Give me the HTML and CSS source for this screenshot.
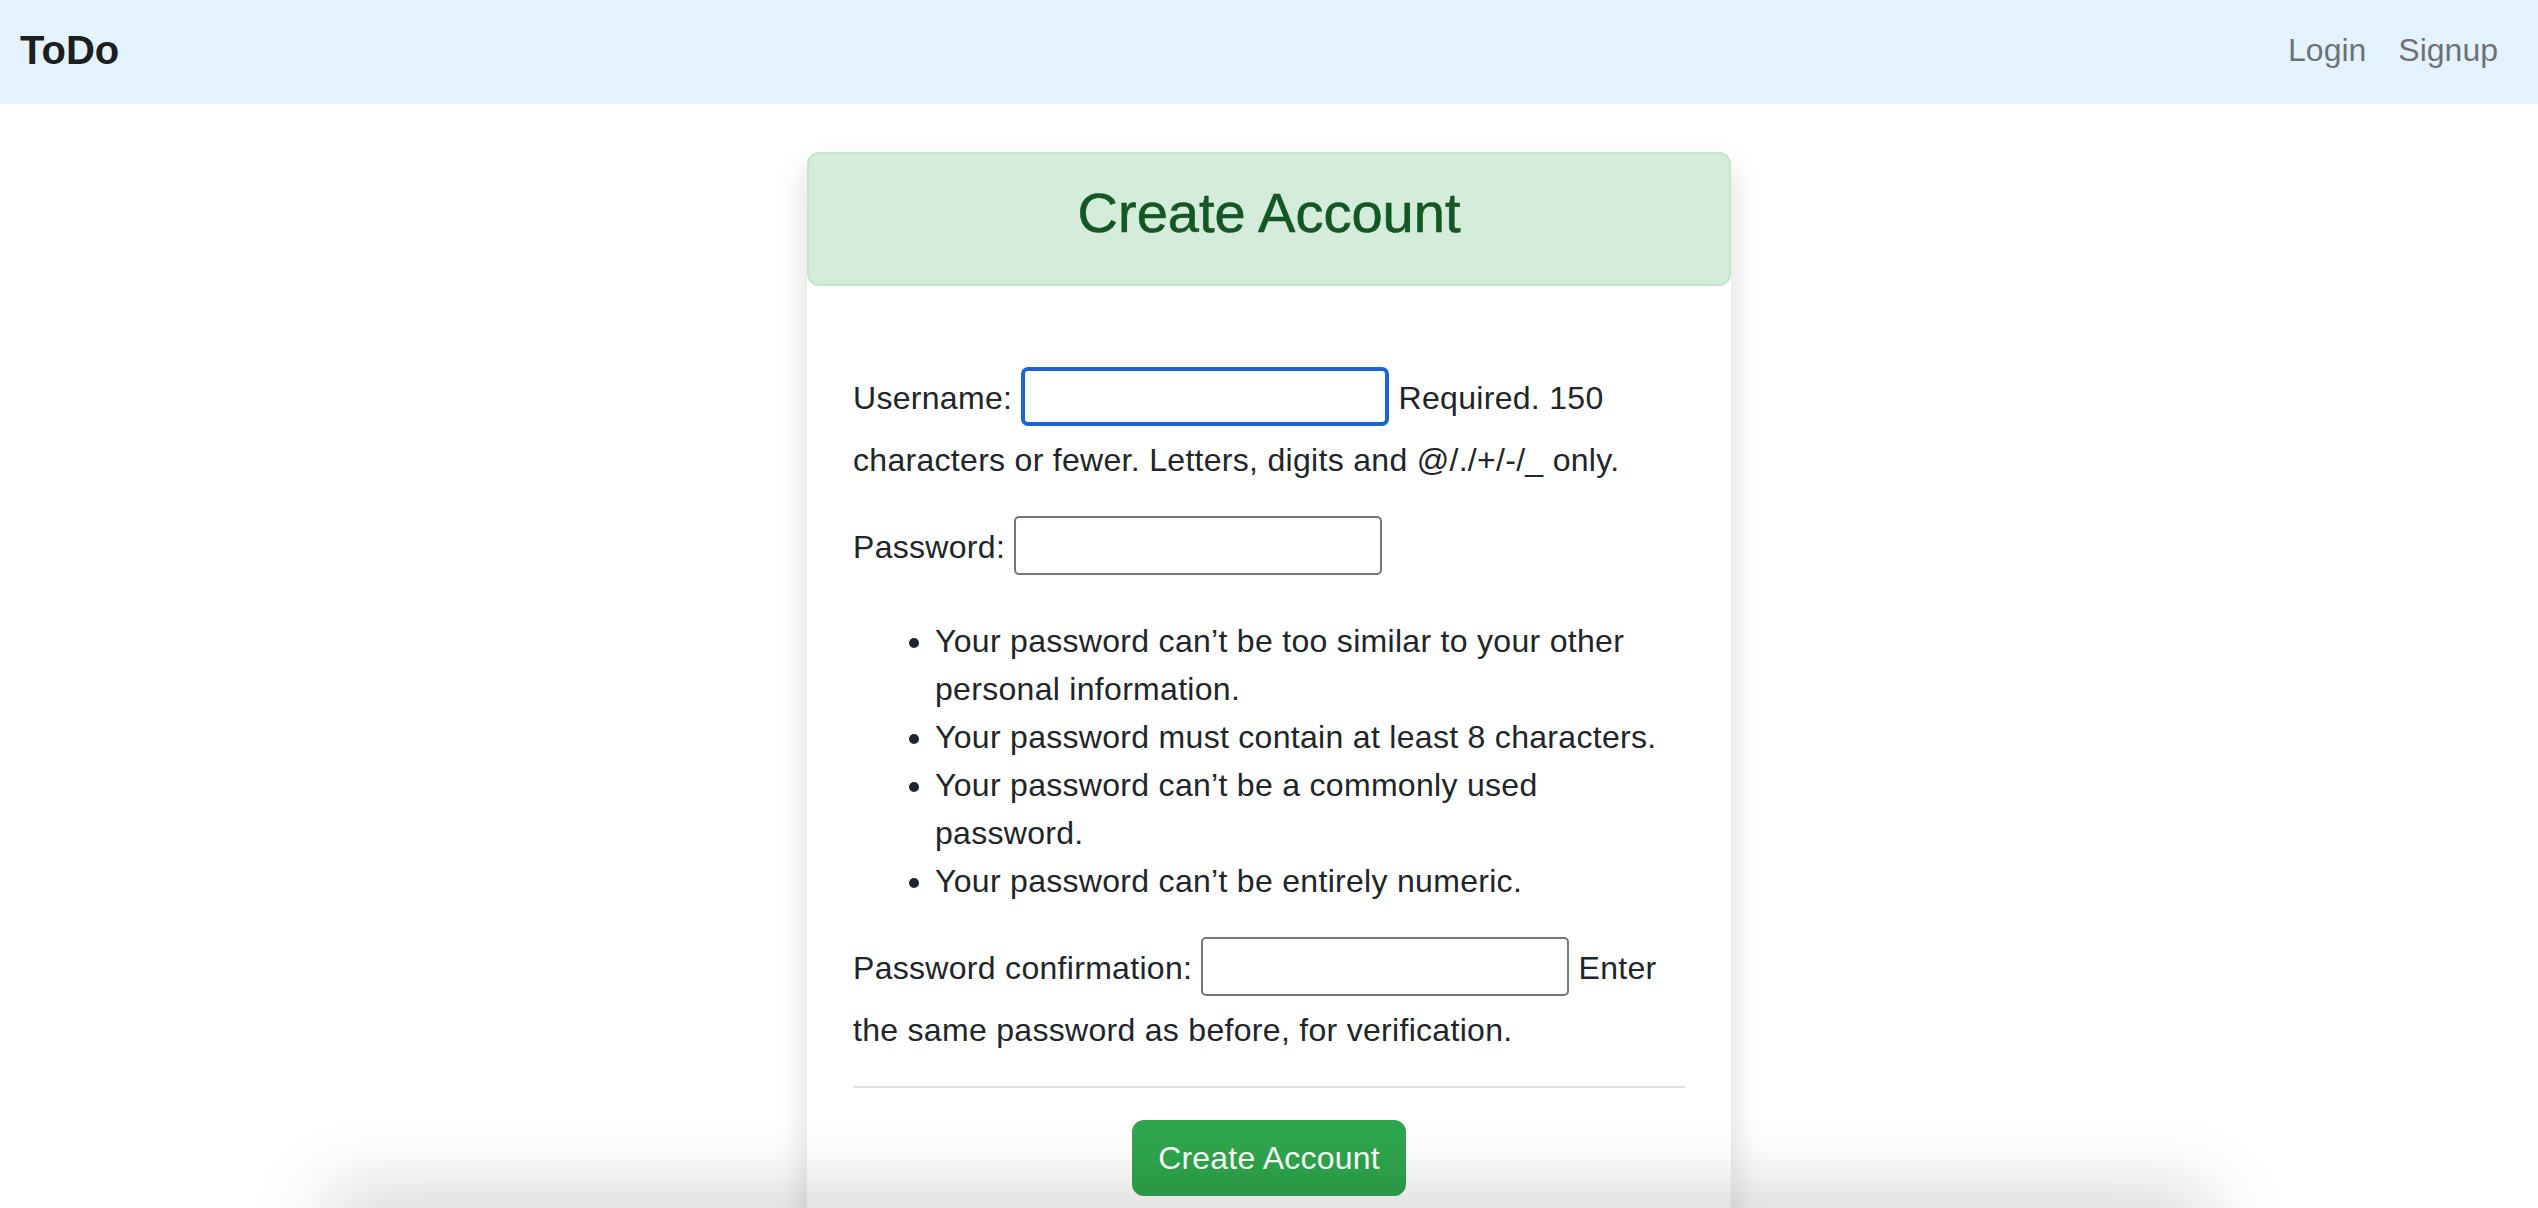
FILE: index.html
```html
<!DOCTYPE html>
<html lang="en">
<head>
<meta charset="utf-8">
<title>ToDo - Create Account</title>
<link rel="stylesheet" href="styles.css">
</head>
<body>
<nav class="navbar">
  <a class="brand" href="#">ToDo</a>
  <div class="nav-links">
    <a class="nav-link" href="#">Login</a>
    <a class="nav-link" href="#">Signup</a>
  </div>
</nav>
<main class="page">
  <section class="card">
    <div class="card-header">
      <h3 class="card-title">Create Account</h3>
    </div>
    <div class="card-body">
      <form class="signup-form">
        <p class="form-row"><label for="id_username">Username:</label> <input class="field is-focused" type="text" id="id_username"> Required. 150 characters or fewer. Letters, digits and @/./+/-/_ only.</p>
        <p class="form-row"><label for="id_password1">Password:</label> <input class="field" type="password" id="id_password1"></p>
        <ul class="help-list">
          <li>Your password can’t be too similar to your other personal information.</li>
          <li>Your password must contain at least 8 characters.</li>
          <li>Your password can’t be a commonly used password.</li>
          <li>Your password can’t be entirely numeric.</li>
        </ul>
        <p class="form-row"><label for="id_password2">Password confirmation:</label> <input class="field" type="password" id="id_password2"> Enter the same password as before, for verification.</p>
        <hr class="divider">
        <div class="actions">
          <button class="btn" type="button">Create Account</button>
        </div>
      </form>
    </div>
  </section>
</main>
<div class="fog"></div>
</body>
</html>
```

FILE: styles.css
```css
* {
  box-sizing: border-box;
}

html,
body {
  margin: 0;
}

body {
  font-family: "Liberation Sans", Arial, sans-serif;
  font-size: 32px;
  line-height: 1.5;
  color: #212529;
  background: #ffffff;
}

.navbar {
  display: flex;
  align-items: center;
  justify-content: space-between;
  height: 104px;
  padding: 0 24px 5px 20px;
  background: #e3f2fd;
}

.brand {
  font-size: 40px;
  font-weight: 700;
  line-height: 60px;
  color: rgba(0, 0, 0, 0.9);
  text-decoration: none;
}

.nav-links {
  display: flex;
}

.nav-link {
  padding: 0 16px;
  line-height: 48px;
  color: rgba(0, 0, 0, 0.55);
  text-decoration: none;
}

.page {
  display: flex;
  justify-content: center;
  padding-top: 48px;
}

.card {
  width: 924px;
  background: #ffffff;
  border-radius: 12px;
  box-shadow: 0 16px 32px rgba(0, 0, 0, 0.15);
}

.card-header {
  background: #d4edda;
  border: 2px solid #c3e6cb;
  border-radius: 12px;
  padding: 25px 0 38px;
  text-align: center;
}

.card-title {
  margin: 0;
  font-size: 56px;
  font-weight: 400;
  line-height: 1.2;
  color: #155724;
  -webkit-text-stroke: 0.6px #155724;
}

.card-body {
  padding: 81px 46px 48px;
}

.signup-form {
  letter-spacing: 0.3px;
}

.form-row {
  margin: 0 0 32px;
}

.field {
  width: 368px;
  height: 59px;
  margin: 0 0 10px;
  padding: 0 8px;
  font: 32px "Liberation Sans", Arial, sans-serif;
  color: #212529;
  background: #ffffff;
  border: 2px solid #767676;
  border-radius: 5px;
  vertical-align: 2px;
  outline: none;
}

.field.is-focused {
  border: 4px solid #1b64d2;
  border-radius: 7px;
}

.help-list {
  margin: 0 0 32px;
  padding: 0 10px 0 82px;
}

.divider {
  margin: 0 0 32px;
  border: 0;
  border-top: 2px solid #e1e1e1;
}

.actions {
  text-align: center;
}

.btn {
  font: 32px/48px "Liberation Sans", Arial, sans-serif;
  letter-spacing: 0.2px;
  color: #ffffff;
  background: #2fa64d;
  border: 2px solid #2fa64d;
  border-radius: 12px;
  padding: 12px 24px;
  cursor: pointer;
}

.fog {
  position: fixed;
  left: 340px;
  right: 340px;
  bottom: -40px;
  height: 40px;
  box-shadow: 0 0 80px 10px rgba(0, 0, 0, 0.22);
  pointer-events: none;
}
```
